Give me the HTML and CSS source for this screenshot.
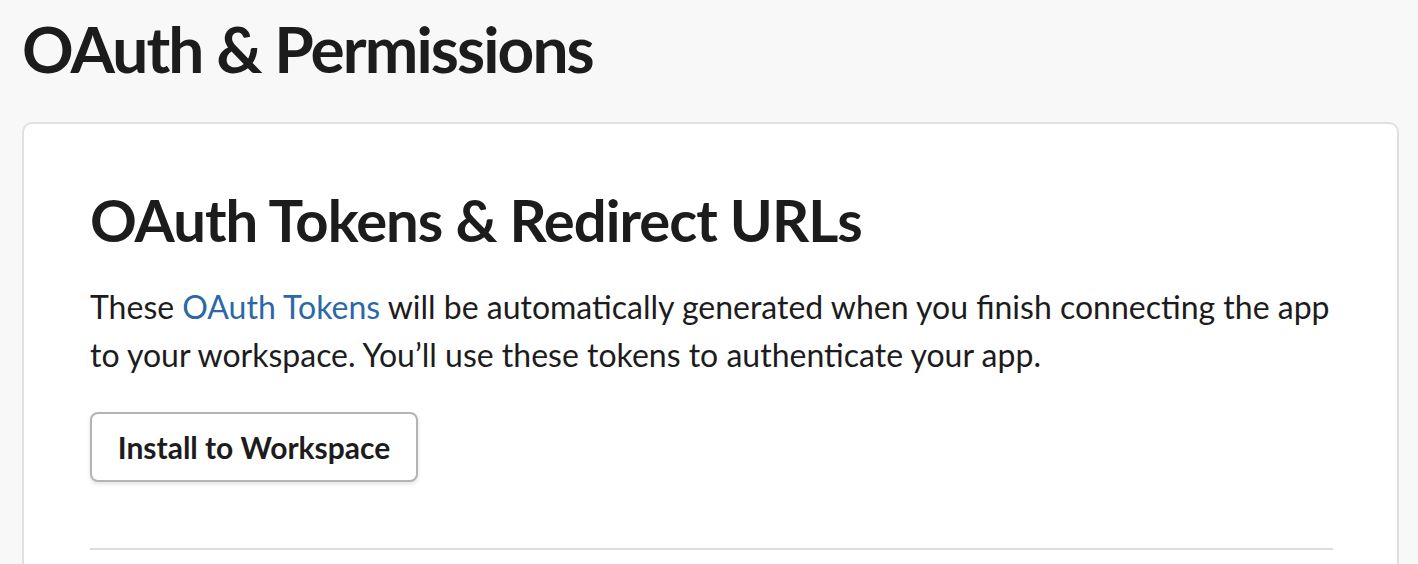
FILE: index.html
```html
<!DOCTYPE html>
<html lang="en">
<head>
    <meta charset="UTF-8">
    <meta name="viewport" content="width=device-width, initial-scale=1.0">
    <title>OAuth &amp; Permissions</title>
    <link rel="stylesheet" href="styles.css">
</head>
<body>
    <div class="page">
        <h1 class="page-title">OAuth &amp; Permissions</h1>

        <section class="card">
            <h2 class="card-title">OAuth Tokens &amp; Redirect URLs</h2>
            <p class="card-text">
                These <a href="#">OAuth Tokens</a> will be automatically generated when you finish connecting the app
                to your workspace. You’ll use these tokens to authenticate your app.
            </p>
            <button class="btn">Install to Workspace</button>
            <hr class="divider">
        </section>
    </div>
</body>
</html>
```

FILE: styles.css
```css
html, body {
    margin: 0;
    height: 100%;
    overflow: hidden;
}
body {
    background: #f8f8f8;
    color: #1d1c1d;
    font-family: Lato, "Noto Sans", sans-serif;
}
.page {
    padding: 0 19px 0 22px;
}
.page-title {
    margin: 11px 0 35px;
    font-size: 64px;
    font-weight: 700;
    line-height: 76px;
    letter-spacing: -1.9px;
}
.card {
    background: #fff;
    border: 2px solid #e0e0e0;
    border-radius: 10px;
    padding: 61px 64px 200px 66px;
}
.card-title {
    margin: 0;
    font-size: 58px;
    font-weight: 700;
    line-height: 70px;
    letter-spacing: -1px;
}
.card-text {
    margin: 28px 0 33px;
    font-size: 32px;
    line-height: 48px;
}
.card-text a {
    color: #2c67a8;
    text-decoration: none;
}
.btn {
    display: block;
    width: 328px;
    height: 70px;
    padding: 0;
    background: #fff;
    border: 2px solid #b4b4b4;
    border-radius: 8px;
    box-shadow: 0 2px 4px rgba(0, 0, 0, 0.12);
    color: #1d1c1d;
    font-family: inherit;
    font-size: 30px;
    font-weight: 700;
    cursor: pointer;
}
.divider {
    margin: 66px 0 0;
    border: none;
    border-top: 2px solid #dddddd;
}
```
